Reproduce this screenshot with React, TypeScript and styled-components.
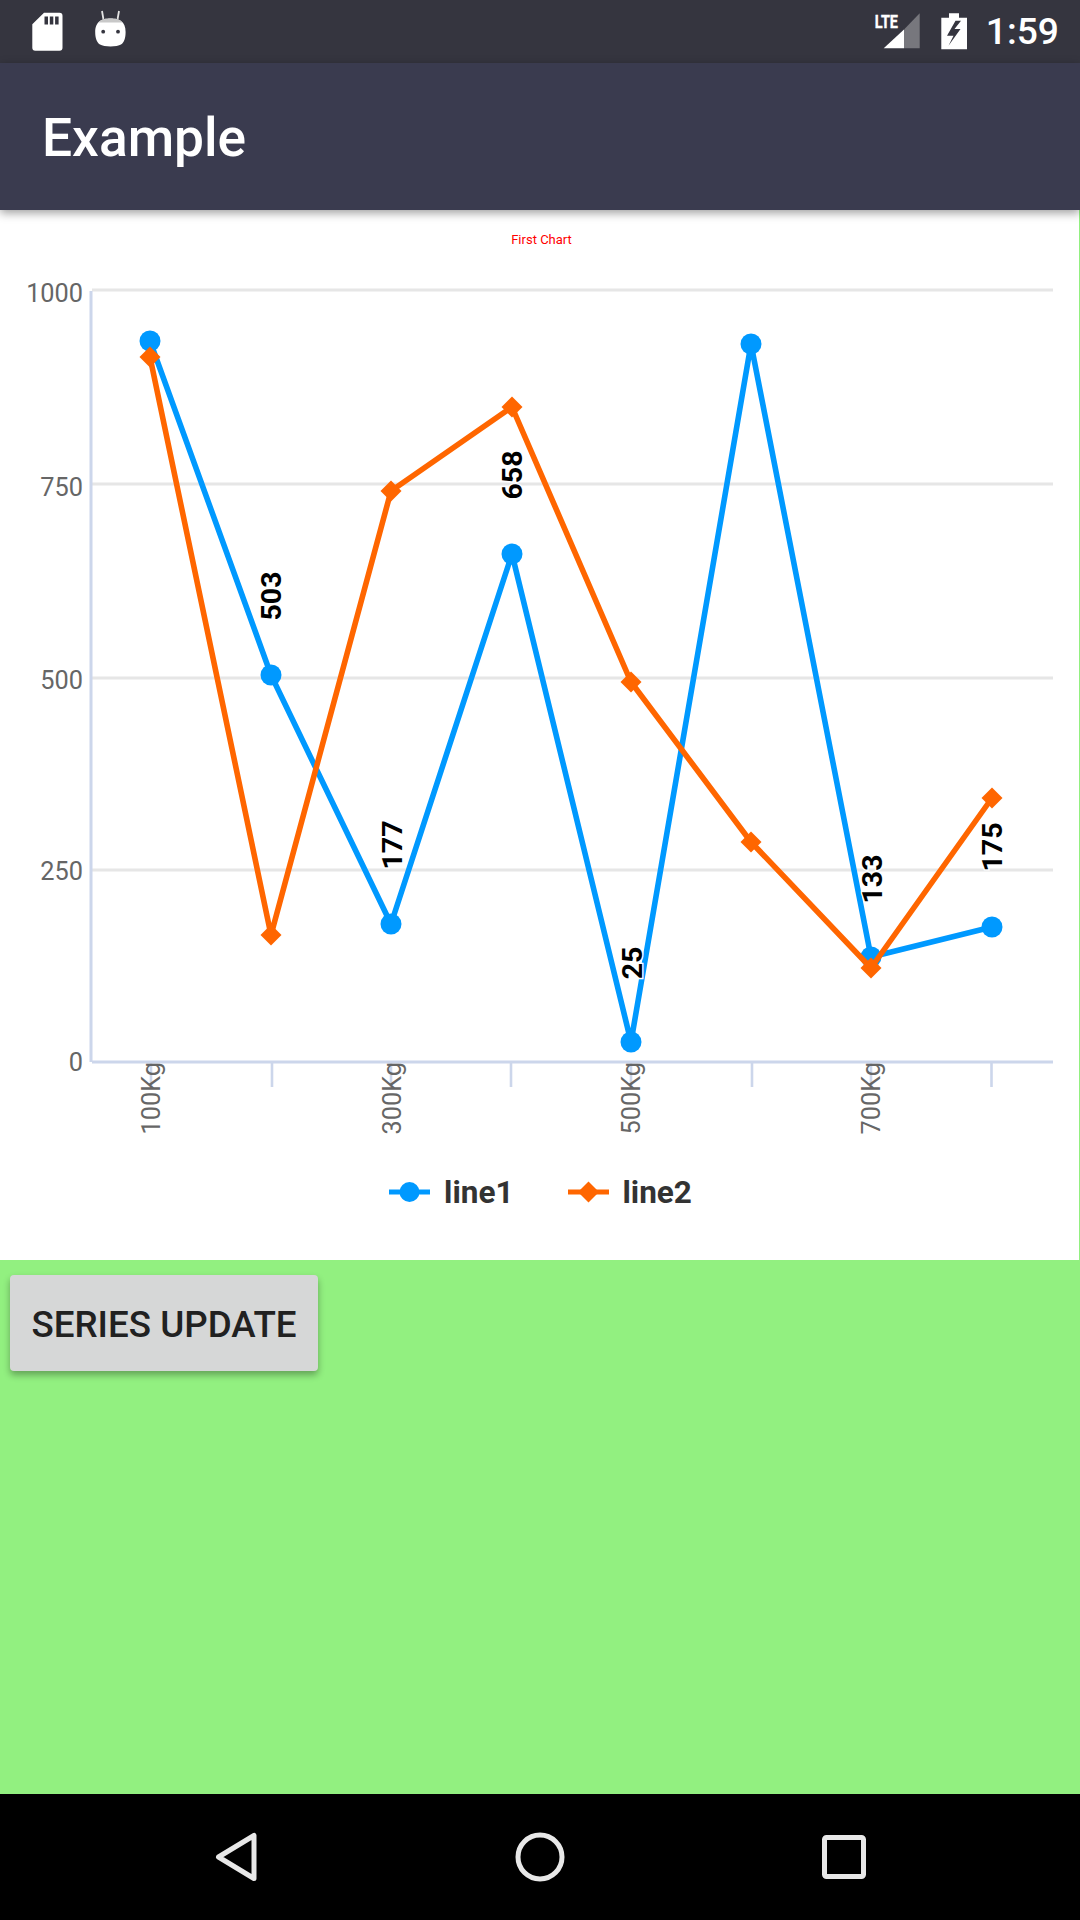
import React from "react";
import styled, { createGlobalStyle } from "styled-components";

const Global = createGlobalStyle`
  html, body { margin: 0; padding: 0; background: #000; }
  #root { width: 1080px; height: 1920px; }
  * { box-sizing: border-box; }
`;

const FONT = `Roboto, "Liberation Sans", sans-serif`;

const Screen = styled.div`
  width: 1080px;
  height: 1920px;
  display: flex;
  flex-direction: column;
  font-family: ${FONT};
  overflow: hidden;
`;
const StatusBar = styled.div`
  height: 63px;
  flex: none;
  background: #35353f;
  display: flex;
  justify-content: space-between;
  align-items: flex-start;
  color: #fff;
  padding: 0 21px 0 32px;
`;
const StatusGroup = styled.div<{ $gap: number }>`
  display: flex;
  align-items: flex-start;
  gap: ${(p) => p.$gap}px;
  height: 63px;
`;
const Clock = styled.span`
  font-size: 37.2px;
  font-weight: 500;
  line-height: 63px;
  margin-left: -2px;
`;
const LteText = styled.text`
  font-family: ${FONT};
  font-weight: 700;
  font-size: 18.8px;
  fill: #fff;
  stroke: #fff;
  stroke-width: 0.4;
`;
const AppBar = styled.header`
  height: 147px;
  flex: none;
  background: #3a3b4f;
  color: #fff;
  display: flex;
  align-items: center;
  padding: 3px 0 0 42px;
  font-size: 53.3px;
  font-weight: 500;
  position: relative;
  z-index: 2;
  box-shadow: 0 3px 9px rgba(0, 0, 0, 0.38);
`;
const Content = styled.main`
  flex: 1;
  background: #92f080;
  display: flex;
  flex-direction: column;
  align-items: flex-start;
`;
const ChartCard = styled.section`
  width: 1079px;
  height: 1050px;
  background: #fff;
  flex: none;
`;
const ChartTitle = styled.div`
  height: 60px;
  line-height: 60px;
  text-align: center;
  padding-left: 4px;
  color: #ff0000;
  font-size: 13px;
`;
const ChartSvg = styled.svg`
  display: block;
  width: 1080px;
  height: 900px;
`;
const GridLine = styled.line`
  stroke: #e6e6e6;
  stroke-width: 3;
`;
const AxisLine = styled.line`
  stroke: #ccd6eb;
  stroke-width: 3;
`;
const Tick = styled.line`
  stroke: #ccd6eb;
  stroke-width: 2.6;
`;
const YLabel = styled.text`
  font-family: ${FONT};
  font-size: 25.3px;
  fill: #666;
  text-anchor: end;
`;
const XLabel = styled.text`
  font-family: ${FONT};
  font-size: 25.3px;
  fill: #666;
  text-anchor: end;
`;
const Series = styled.polyline<{ $color: string }>`
  fill: none;
  stroke: ${(p) => p.$color};
  stroke-width: 5.6;
  stroke-linejoin: round;
`;
const DataLabel = styled.text`
  font-family: ${FONT};
  font-size: 28.5px;
  font-weight: 700;
  fill: #000;
  stroke: #fff;
  stroke-width: 2.6;
  paint-order: stroke;
  text-anchor: middle;
`;
const Legend = styled.div`
  height: 44px;
  display: flex;
  justify-content: center;
  align-items: center;
  gap: 54px;
  padding-left: 2px;
`;
const LegendItem = styled.div`
  display: flex;
  align-items: center;
  gap: 14px;
  color: #333;
  font-size: 31.5px;
  font-weight: 700;
`;
const LegendSymbol = styled.svg`
  display: block;
  width: 41px;
  height: 24px;
`;
const ActionButton = styled.button`
  margin: 15px 0 0 10px;
  width: 308px;
  height: 96px;
  border: 0;
  border-radius: 4px;
  background: #d6d7d7;
  color: #212121;
  font-family: ${FONT};
  font-size: 36.75px;
  font-weight: 500;
  padding: 2px 0 0;
  box-shadow: 0 4px 7px rgba(0, 0, 0, 0.32);
`;
const NavBar = styled.nav`
  height: 126px;
  flex: none;
  background: #000;
  display: flex;
  justify-content: center;
  align-items: center;
  gap: 244px;
`;
const NavIcon = styled.svg`
  display: block;
  width: 60px;
  height: 60px;
  fill: none;
  stroke: #e8e8e8;
  stroke-width: 5;
  stroke-linejoin: round;
`;

const tickXs = [151, 272, 391, 511, 631, 752, 871, 991.5];
const xs = [150, 271, 391, 512, 631, 751, 871, 992];
const blueY = [341, 675, 924, 554, 1042, 344, 957, 927];
const orangeY = [357, 935, 491, 407, 682, 842, 968, 798];
const gridYs = [290, 484, 678, 870];
const yLabels: [string, number][] = [
  ["1000", 302],
  ["750", 496],
  ["500", 689],
  ["250", 880],
  ["0", 1071],
];
const xLabels: [string, number][] = [
  ["100Kg", 151],
  ["300Kg", 391.5],
  ["500Kg", 631],
  ["700Kg", 871],
];
const dataLabels: [string, number, number][] = [
  ["503", 271, 596],
  ["177", 391.5, 845],
  ["658", 512, 475],
  ["25", 631.5, 963],
  ["133", 871.5, 879],
  ["175", 992, 847],
];

const BLUE = "#0099ff";
const ORANGE = "#ff6600";
const pts = (ys: number[]) => ys.map((y, i) => `${xs[i]},${y}`).join(" ");
const diamond = (x: number, y: number, r = 10.5) =>
  `${x},${y - r} ${x + r},${y} ${x},${y + r} ${x - r},${y}`;

const SdCard = () => (
  <svg width="31" height="63" viewBox="32 0 31 63" style={{ display: "block" }}>
    <path
      d="M44 12.7H59.5a3 3 0 0 1 3 3V47.7a3 3 0 0 1-3 3H35.3a3 3 0 0 1-3-3V24.3Z"
      fill="#fff"
    />
    <path d="M44.5 16.5h3.5v8h-3.5zM49.8 16.5h3.5v8h-3.5zM55.1 16.5h3.5v8h-3.5z" fill="#35353f" />
  </svg>
);

const AndroidHead = () => (
  <svg width="31" height="63" viewBox="95 0 31 63" style={{ display: "block" }}>
    <path d="M102 11l1.4 8M119 11l-1.4 8" stroke="#e4e4e4" strokeWidth="1.8" fill="none" />
    <path
      d="M100 21c3-3.4 18-3.4 21 0 3 2 4.6 5.5 4.6 11 0 6-1.4 10.5-4.6 12.6-4 2.6-17 2.6-21 0-3.2-2.1-4.8-6.6-4.8-12.6 0-5.5 1.8-9 4.8-11z"
      fill="#fff"
    />
    <path d="M100 21c3-3.4 18-3.4 21 0l1.3 1.6H98.7z" fill="#c8c8c8" />
    <circle cx="103.2" cy="31.7" r="1.9" fill="#35353f" />
    <circle cx="118" cy="31.7" r="1.9" fill="#35353f" />
  </svg>
);

const Signal = () => (
  <svg width="46" height="63" viewBox="876 0 46 63" style={{ display: "block" }}>
    <LteText x="876.7" y="27.8" textLength="23.3" lengthAdjust="spacingAndGlyphs">
      LTE
    </LteText>
    <path d="M885.7 48.3L906 29.5V48.3Z" fill="#fff" />
    <path d="M906 29.5L921.7 13.3V48.3H906Z" fill="#77777d" />
  </svg>
);

const Battery = () => (
  <svg width="26" height="63" viewBox="943 0 26 63" style={{ display: "block" }}>
    <path d="M951 13.3h10v4.4h8v31.6H943.3V17.7H951Z" fill="#fff" />
    <path d="M957.5 20.7H963L956.5 29H962.5L950.5 45.7L955.5 35.7H949Z" fill="#35353f" />
  </svg>
);

export default function App() {
  return (
    <Screen>
      <Global />
      <StatusBar>
        <StatusGroup $gap={32}>
          <SdCard />
          <AndroidHead />
        </StatusGroup>
        <StatusGroup $gap={21}>
          <Signal />
          <Battery />
          <Clock>1:59</Clock>
        </StatusGroup>
      </StatusBar>
      <AppBar>Example</AppBar>
      <Content>
        <ChartCard>
          <ChartTitle>First Chart</ChartTitle>
          <ChartSvg viewBox="0 270 1080 900">
            {gridYs.map((y) => (
              <GridLine key={y} x1={92} x2={1053} y1={y} y2={y} />
            ))}
            <AxisLine x1={91} x2={91} y1={291} y2={1062} />
            <AxisLine x1={92} x2={1053} y1={1062} y2={1062} />
            {tickXs.map((x) => (
              <Tick key={x} x1={x} x2={x} y1={1062} y2={1087} />
            ))}
            {yLabels.map(([t, y]) => (
              <YLabel key={t} x={83} y={y}>
                {t}
              </YLabel>
            ))}
            {xLabels.map(([t, x]) => (
              <XLabel key={t} transform={`translate(${x + 9} 1062) rotate(-90)`}>
                {t}
              </XLabel>
            ))}
            <Series $color={BLUE} points={pts(blueY)} />
            {blueY.map((y, i) => (
              <circle key={i} cx={xs[i]} cy={y} r={10.5} fill={BLUE} />
            ))}
            <Series $color={ORANGE} points={pts(orangeY)} />
            {orangeY.map((y, i) => (
              <polygon key={i} points={diamond(xs[i], y)} fill={ORANGE} />
            ))}
            {dataLabels.map(([t, x, y]) => (
              <DataLabel key={t} transform={`translate(${x + 10} ${y}) rotate(-90)`}>
                {t}
              </DataLabel>
            ))}
          </ChartSvg>
          <Legend>
            <LegendItem>
              <LegendSymbol viewBox="0 0 41 24">
                <line x1="0" x2="41" y1="12" y2="12" stroke={BLUE} strokeWidth="5" />
                <circle cx="20.5" cy="12" r="10" fill={BLUE} />
              </LegendSymbol>
              line1
            </LegendItem>
            <LegendItem>
              <LegendSymbol viewBox="0 0 41 24">
                <line x1="0" x2="41" y1="12" y2="12" stroke={ORANGE} strokeWidth="5" />
                <polygon points={diamond(20.5, 12)} fill={ORANGE} />
              </LegendSymbol>
              line2
            </LegendItem>
          </Legend>
        </ChartCard>
        <ActionButton>SERIES UPDATE</ActionButton>
      </Content>
      <NavBar>
        <NavIcon viewBox="0 0 60 60">
          <path d="M12.5 30L48 8.5V51.5Z" />
        </NavIcon>
        <NavIcon viewBox="0 0 60 60">
          <circle cx="30" cy="30" r="22" />
        </NavIcon>
        <NavIcon viewBox="0 0 60 60">
          <rect x="10.5" y="10.5" width="39" height="39" rx="2" />
        </NavIcon>
      </NavBar>
    </Screen>
  );
}
